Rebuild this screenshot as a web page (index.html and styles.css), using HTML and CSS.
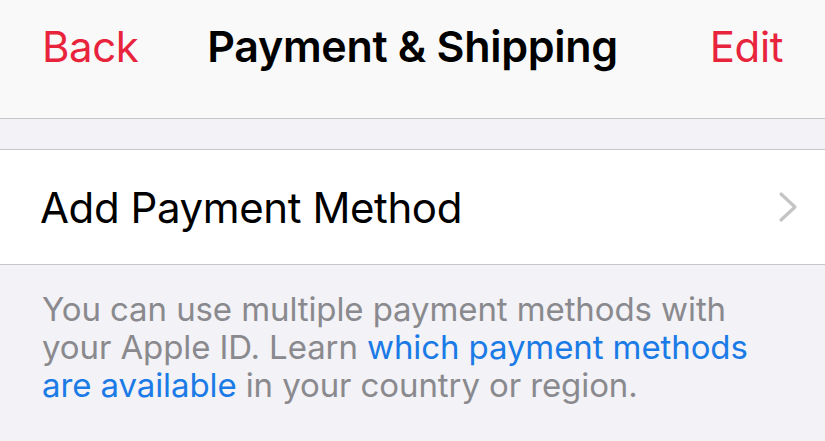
FILE: index.html
```html
<!DOCTYPE html>
<html lang="en">
<head>
    <meta charset="UTF-8">
    <meta name="viewport" content="width=device-width, initial-scale=1.0">
    <title>Payment &amp; Shipping</title>
    <link rel="stylesheet" href="styles.css">
</head>
<body>
    <div class="nav-bar">
        <span class="nav-link">Back</span>
        <h1 class="nav-title">Payment &amp; Shipping</h1>
        <span class="nav-link nav-right">Edit</span>
    </div>

    <div class="group-gap"></div>

    <div class="list-row">
        <span class="row-label">Add Payment Method</span>
        <svg class="chevron" width="20" height="32" viewBox="0 0 20 32">
            <path d="M3 3 L17 16 L3 29" fill="none" stroke="#c4c4c7" stroke-width="3.2" stroke-linecap="round" stroke-linejoin="round"/>
        </svg>
    </div>

    <p class="footer-note">
        You can use multiple payment methods with your Apple ID. Learn
        <a href="#" class="note-link">which payment methods are available</a>
        in your country or region.
    </p>
</body>
</html>
```

FILE: styles.css
```css
body {
    margin: 0;
    padding: 0;
    font-family: Inter, "Noto Sans", sans-serif;
    background-color: #f2f2f7;
    min-height: 100vh;
}
.nav-bar {
    height: 119px;
    box-sizing: border-box;
    padding: 0 42px 26px 42px;
    display: grid;
    grid-template-columns: 1fr auto 1fr;
    align-items: center;
    background-color: #f9f9f9;
    border-bottom: 1px solid #c6c6c8;
}
.nav-link {
    color: #e8243d;
    font-size: 42px;
    letter-spacing: -0.4px;
}
.nav-right {
    justify-self: end;
}
.nav-title {
    margin: 0;
    font-size: 43px;
    font-weight: 600;
    letter-spacing: -0.3px;
    color: #000;
}
.group-gap {
    height: 30px;
    border-bottom: 1px solid #c6c6c8;
}
.list-row {
    height: 115px;
    box-sizing: border-box;
    padding: 0 27px 0 40px;
    display: flex;
    align-items: center;
    justify-content: space-between;
    background: white;
    border-bottom: 1px solid #c6c6c8;
}
.row-label {
    font-size: 42px;
    letter-spacing: -0.4px;
    color: #000;
}
.chevron {
    display: block;
}
.footer-note {
    margin: 0;
    padding: 25px 50px 0 42px;
    font-size: 33px;
    line-height: 38px;
    color: #8a8a8e;
    letter-spacing: -0.1px;
}
.note-link {
    color: #1b7be6;
    text-decoration: none;
}
```
